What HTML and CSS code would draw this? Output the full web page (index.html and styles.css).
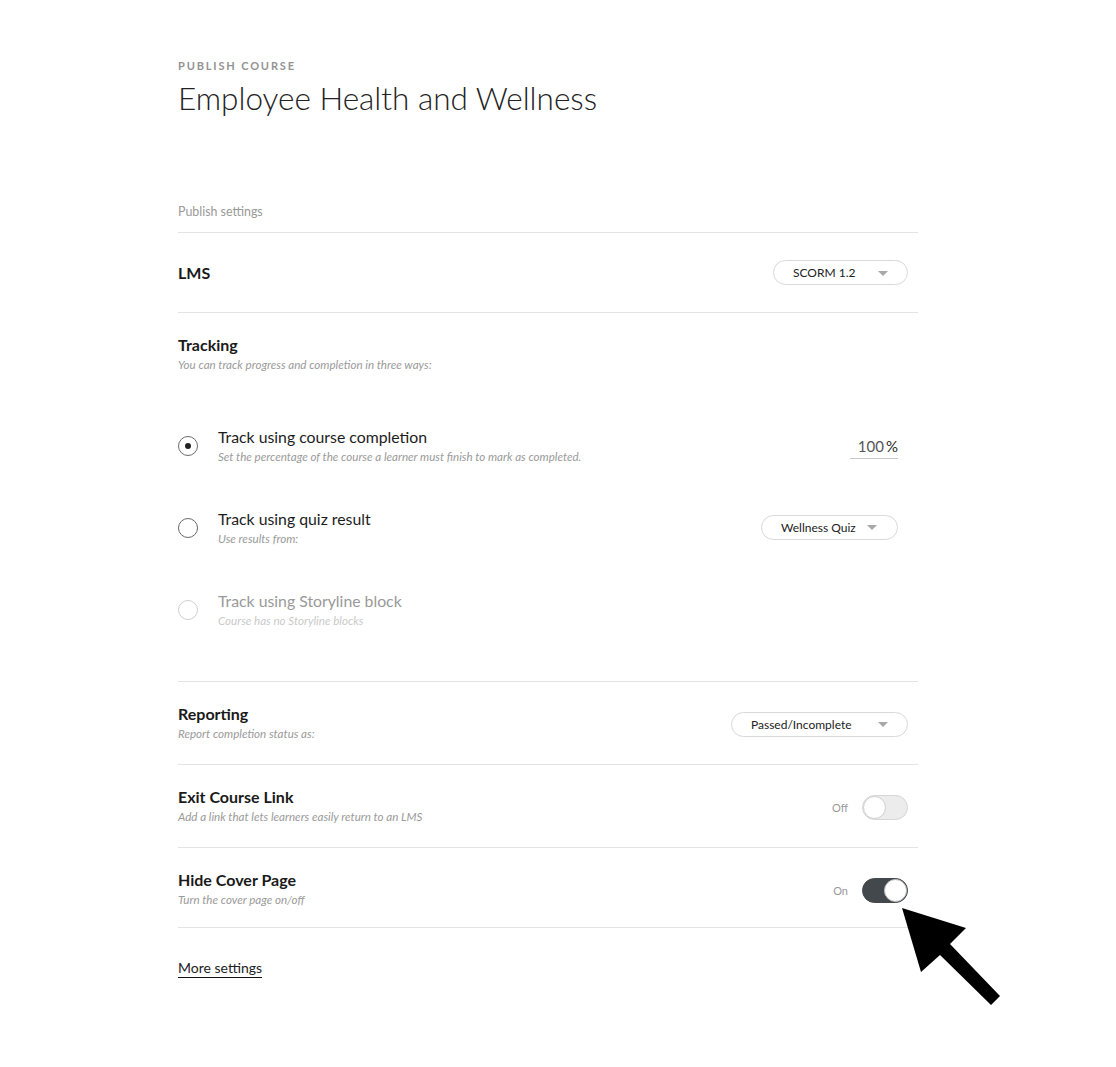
FILE: index.html
```html
<!DOCTYPE html>
<html lang="en">
<head>
    <meta charset="UTF-8">
    <meta name="viewport" content="width=device-width, initial-scale=1.0">
    <title>Publish Course</title>
    <link rel="stylesheet" href="styles.css">
</head>
<body>
    <div class="page">
        <header class="page-header">
            <div class="eyebrow">Publish course</div>
            <h1 class="course-title">Employee Health and Wellness</h1>
        </header>

        <div class="settings-label">Publish settings</div>

        <section class="setting setting-single">
            <div class="setting-text">
                <h2 class="setting-title">LMS</h2>
            </div>
            <div class="select select-lms">
                <span>SCORM 1.2</span>
                <span class="caret"></span>
            </div>
        </section>

        <section class="setting tracking">
            <h2 class="setting-title">Tracking</h2>
            <p class="setting-desc">You can track progress and completion in three ways:</p>

            <div class="track-options">
                <div class="track-option">
                    <span class="radio checked"></span>
                    <div class="option-text">
                        <div class="option-title">Track using course completion</div>
                        <div class="option-desc">Set the percentage of the course a learner must finish to mark as completed.</div>
                    </div>
                    <div class="percent">
                        <span class="percent-value">100</span><span class="percent-sign">%</span>
                    </div>
                </div>

                <div class="track-option">
                    <span class="radio"></span>
                    <div class="option-text">
                        <div class="option-title">Track using quiz result</div>
                        <div class="option-desc">Use results from:</div>
                    </div>
                    <div class="select select-quiz">
                        <span>Wellness Quiz</span>
                        <span class="caret"></span>
                    </div>
                </div>

                <div class="track-option disabled">
                    <span class="radio"></span>
                    <div class="option-text">
                        <div class="option-title">Track using Storyline block</div>
                        <div class="option-desc">Course has no Storyline blocks</div>
                    </div>
                </div>
            </div>
        </section>

        <section class="setting">
            <div class="setting-text">
                <h2 class="setting-title">Reporting</h2>
                <p class="setting-desc">Report completion status as:</p>
            </div>
            <div class="select select-report">
                <span>Passed/Incomplete</span>
                <span class="caret"></span>
            </div>
        </section>

        <section class="setting">
            <div class="setting-text">
                <h2 class="setting-title">Exit Course Link</h2>
                <p class="setting-desc">Add a link that lets learners easily return to an LMS</p>
            </div>
            <div class="toggle-wrap">
                <span class="toggle-label">Off</span>
                <span class="toggle"><span class="knob"></span></span>
            </div>
        </section>

        <section class="setting setting-last">
            <div class="setting-text">
                <h2 class="setting-title">Hide Cover Page</h2>
                <p class="setting-desc">Turn the cover page on/off</p>
            </div>
            <div class="toggle-wrap">
                <span class="toggle-label">On</span>
                <span class="toggle on"><span class="knob"></span></span>
            </div>
        </section>

        <a class="more-link" href="#">More settings</a>
    </div>

    <!-- pointer callout -->
    <svg class="callout-arrow" width="110" height="110" viewBox="0 0 110 110">
        <polygon points="2,2 66,22 50,38 100,90 91,99 40,49 21,66" fill="#000"/>
    </svg>
</body>
</html>
```

FILE: styles.css
```css
body {
    margin: 0;
    font-family: Lato, "Open Sans", sans-serif;
    color: #1c1c1c;
    background: #fff;
}

.page {
    width: 740px;
    margin-left: 178px;
    padding-top: 58px;
    padding-bottom: 80px;
}

.eyebrow {
    font-size: 11px;
    font-weight: 700;
    line-height: 16px;
    letter-spacing: 1.85px;
    text-transform: uppercase;
    color: #939393;
}

.course-title {
    margin: 4px 0 0;
    font-size: 31.5px;
    font-weight: 300;
    line-height: 40px;
    color: #222;
}

.settings-label {
    margin-top: 86px;
    padding-bottom: 12px;
    font-size: 12.4px;
    line-height: 16px;
    color: #999;
    border-bottom: 1px solid #e3e3e3;
}

.setting {
    display: flex;
    align-items: center;
    justify-content: space-between;
    padding: 22px 10px 20px 0;
    border-bottom: 1px solid #e3e3e3;
}

.setting-single {
    padding-top: 27px;
    padding-bottom: 27px;
}

.setting-last {
    padding-bottom: 17px;
}

.setting-title {
    margin: 0;
    font-size: 16px;
    font-weight: 700;
    line-height: 20px;
    color: #1a1a1a;
}

.setting-desc {
    margin: 0;
    font-size: 11.6px;
    font-style: italic;
    line-height: 20px;
    color: #9a9a9a;
}

/* tracking block */
.tracking {
    display: block;
    padding-right: 20px;
    padding-bottom: 50px;
}

.track-options {
    display: flex;
    flex-direction: column;
    gap: 42px;
    margin-top: 52px;
}

.track-option {
    display: flex;
    align-items: center;
    gap: 20px;
}

.option-text {
    flex: 1;
}

.option-title {
    font-size: 15.8px;
    line-height: 20px;
    color: #1c1c1c;
}

.option-desc {
    font-size: 11.6px;
    font-style: italic;
    line-height: 20px;
    color: #9a9a9a;
}

.radio {
    box-sizing: border-box;
    width: 20px;
    height: 20px;
    border: 1px solid #6a6a6a;
    border-radius: 50%;
    display: flex;
    align-items: center;
    justify-content: center;
    margin-top: -2px;
}

.radio.checked::after {
    content: "";
    width: 6px;
    height: 6px;
    border-radius: 50%;
    background: #222;
}

.disabled .radio {
    border-color: #cfcfcf;
}

.disabled .option-title {
    color: #999;
}

.disabled .option-desc {
    color: #cacaca;
}

.percent {
    width: 48px;
    text-align: right;
    font-size: 15px;
    line-height: 20px;
    padding-bottom: 2px;
    border-bottom: 1px solid #c8c8c8;
    margin-top: 0;
}

.percent-value {
    color: #555;
}

.percent-sign {
    color: #2a2a2a;
    margin-left: 2px;
}

/* dropdowns */
.select {
    box-sizing: border-box;
    height: 25px;
    display: flex;
    align-items: center;
    justify-content: space-between;
    padding: 0 19px;
    border: 1px solid #d9d9d9;
    border-radius: 13px;
    font-size: 12px;
    color: #222;
}

.select-lms {
    width: 135px;
}

.select-quiz {
    width: 137px;
    padding-right: 20px;
    margin-top: -4px;
}

.select-report {
    width: 177px;
}

.caret {
    width: 0;
    height: 0;
    border-left: 5px solid transparent;
    border-right: 5px solid transparent;
    border-top: 5px solid #a8a8a8;
    margin-top: 1px;
}

/* toggles */
.toggle-wrap {
    display: flex;
    align-items: center;
    gap: 14px;
}

.toggle-label {
    font-size: 11px;
    color: #999;
}

.toggle {
    box-sizing: border-box;
    position: relative;
    width: 46px;
    height: 25px;
    border-radius: 13px;
    border: 1px solid #d6d6d6;
    background: #ececec;
}

.toggle .knob {
    position: absolute;
    top: 0;
    left: 0;
    box-sizing: border-box;
    width: 23px;
    height: 23px;
    border-radius: 50%;
    background: #fff;
    border: 1px solid #cfcfcf;
}

.toggle.on {
    background: #42484b;
    border-color: #42484b;
}

.toggle.on .knob {
    left: auto;
    right: 0;
    border-color: #bdbdbd;
}

.more-link {
    display: inline-block;
    margin-top: 31px;
    font-size: 14px;
    line-height: 18px;
    color: #222;
    text-decoration: none;
    border-bottom: 1px solid #111;
}

.callout-arrow {
    position: absolute;
    left: 900px;
    top: 906px;
}
```
